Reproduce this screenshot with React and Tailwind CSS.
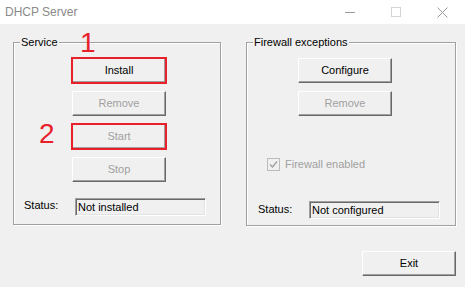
import React from "react";

function Btn({ children, disabled, highlight }) {
  return (
    <div
      className={
        "w-[94px] h-[25px] flex items-center justify-center bg-[#f0f0f0] border border-t-white border-l-white border-r-[#696969] border-b-[#696969] shadow-[inset_-1px_-1px_0_#a0a0a0] " +
        (disabled ? "text-[#a0a0a0] " : "text-black ") +
        (highlight ? "outline-2 outline-[#e8202a] outline-offset-[-1px]" : "")
      }
    >
      {children}
    </div>
  );
}

function StatusRow({ text, pl }) {
  return (
    <div className={"flex items-center " + pl}>
      <span className="w-[51px] mb-[3px]">Status:</span>
      <div className="w-[131px] h-[18px] flex items-center pl-[2px] border border-t-[#a0a0a0] border-l-[#a0a0a0] border-r-white border-b-white shadow-[inset_1px_1px_0_#696969,inset_-1px_-1px_0_#e3e3e3] bg-[#f0f0f0] text-black">
        {text}
      </div>
    </div>
  );
}

function Group({ label, width, height, children }) {
  return (
    <div
      className={
        "relative border border-[#a0a0a0] shadow-[inset_1px_1px_0_#fff,1px_1px_0_#fff] " +
        width +
        " " +
        height
      }
    >
      <span className="absolute left-[6px] top-[-7px] leading-[13px] px-[1px] bg-[#f0f0f0]">
        {label}
      </span>
      {children}
    </div>
  );
}

export default function App() {
  return (
    <div className="relative w-[465px] h-[287px] overflow-hidden bg-[#f0f0f0] flex flex-col font-['Liberation_Sans',Arial,sans-serif] text-[11px] text-black">
      {/* Title bar */}
      <div className="h-[24px] bg-white flex items-center">
        <span className="pl-[5px] text-[12px] text-[#8a8a8a]">DHCP Server</span>
        <div className="ml-auto flex h-full">
          <div className="w-[46px] h-full flex items-center justify-center">
            <svg width="10" height="10" viewBox="0 0 10 10">
              <path d="M0 5.5H10" stroke="#9a9a9a" strokeWidth="1" />
            </svg>
          </div>
          <div className="w-[46px] h-full flex items-center justify-center">
            <svg width="10" height="10" viewBox="0 0 10 10">
              <rect x="0.5" y="0.5" width="9" height="9" fill="none" stroke="#d4d4d4" strokeWidth="1" />
            </svg>
          </div>
          <div className="w-[46px] h-full flex items-center justify-center">
            <svg width="11" height="11" viewBox="0 0 11 11">
              <path d="M0.5 0.5L10.5 10.5M10.5 0.5L0.5 10.5" stroke="#9a9a9a" strokeWidth="1" />
            </svg>
          </div>
        </div>
      </div>

      {/* Groups */}
      <div className="flex gap-[25px] pl-[13px] pt-[18px]">
        <Group label="Service" width="w-[208px]" height="h-[183px]">
          <div className="flex flex-col pt-[15px]">
            <div className="flex flex-col gap-[8px] pl-[58px]">
              <Btn highlight>Install</Btn>
              <Btn disabled>Remove</Btn>
              <Btn disabled highlight>Start</Btn>
              <Btn disabled>Stop</Btn>
            </div>
            <div className="mt-[15px]">
              <StatusRow text="Not installed" pl="pl-[10px]" />
            </div>
          </div>
        </Group>
        <Group label="Firewall exceptions" width="w-[210px]" height="h-[184px]">
          <div className="flex flex-col pt-[15px]">
            <div className="flex flex-col gap-[8px] pl-[51px]">
              <Btn>Configure</Btn>
              <Btn disabled>Remove</Btn>
            </div>
            <div className="mt-[40px] pl-[20px] flex items-center gap-[5px] text-[#a0a0a0]">
              <div className="w-[13px] h-[13px] border border-[#bcbcbc] bg-[#f0f0f0] flex items-center justify-center">
                <svg width="9" height="9" viewBox="0 0 9 9">
                  <path d="M1 4.5L3.5 7L8 1.5" fill="none" stroke="#a0a0a0" strokeWidth="1.4" />
                </svg>
              </div>
              <span>Firewall enabled</span>
            </div>
            <div className="mt-[28px]">
              <StatusRow text="Not configured" pl="pl-[11px]" />
            </div>
          </div>
        </Group>
      </div>

      {/* Exit */}
      <div className="flex justify-end pr-[9px] mt-[25px]">
        <Btn>Exit</Btn>
      </div>

      {/* Annotations */}
      <span className="absolute left-[80px] top-[29px] text-[28px] leading-none text-[#e8202a]">1</span>
      <span className="absolute left-[39px] top-[120px] text-[28px] leading-none text-[#e8202a]">2</span>
    </div>
  );
}
